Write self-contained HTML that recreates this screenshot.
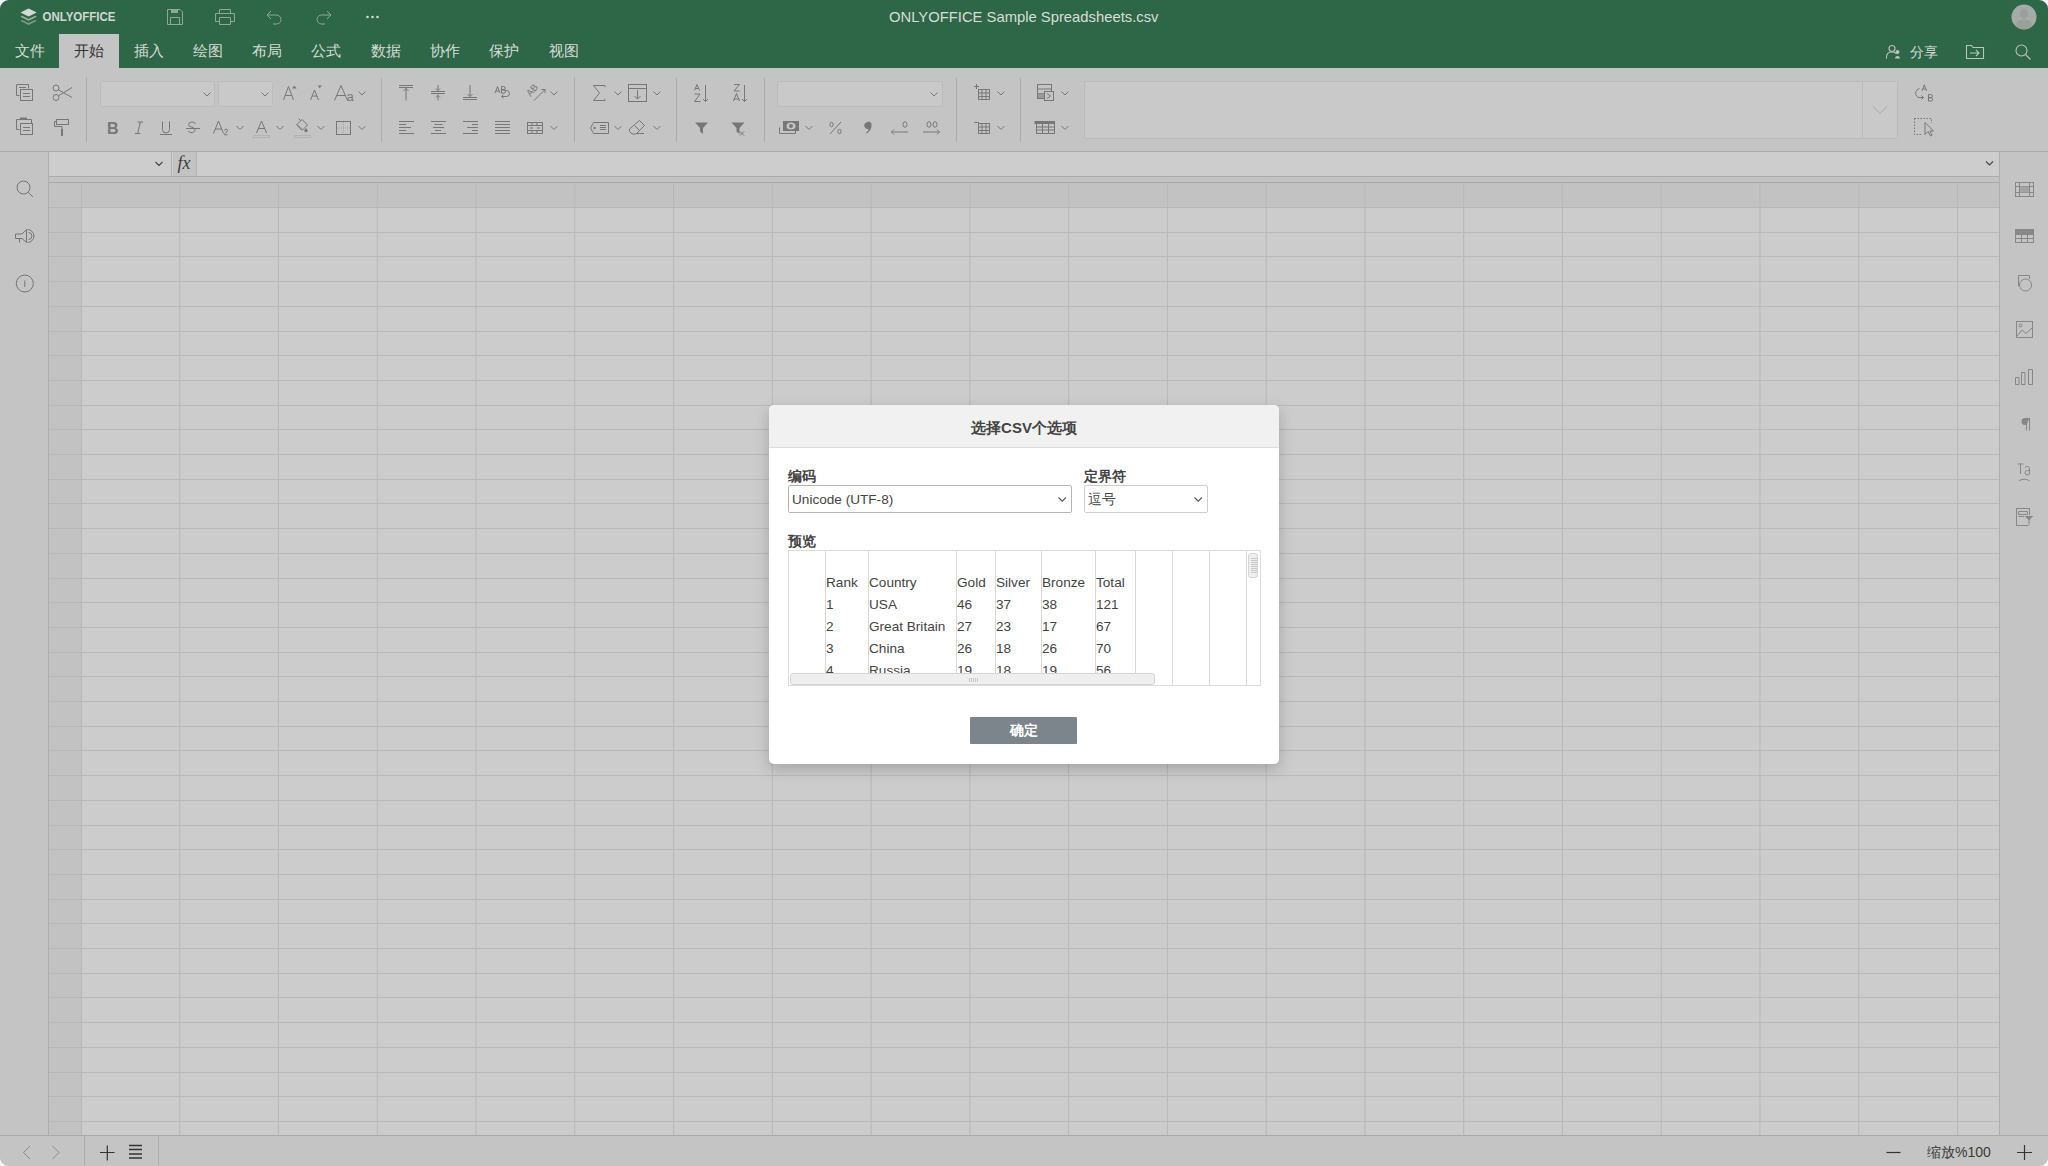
<!DOCTYPE html>
<html><head><meta charset="utf-8">
<style>
*{box-sizing:border-box;margin:0;padding:0}
html,body{width:2048px;height:1166px;overflow:hidden;background:#f4f4f4;font-family:"Liberation Sans",sans-serif}
#win{position:absolute;left:0;top:0;width:2048px;height:1166px;border-radius:9px;overflow:hidden;background:#c4c4c4}
.abs{position:absolute}
#hdr{position:absolute;left:0;top:0;width:2048px;height:68px;background:#2e6747}
.tab{position:absolute;top:34px;height:34px;width:60px;color:#d6dcd8;font-size:15px;line-height:34px;text-align:center}
.tab.act{background:#c4c4c4;color:#333}
#title{position:absolute;left:889px;top:9px;font-size:14.8px;color:#d9ddda;white-space:nowrap}
#tb{position:absolute;left:0;top:68px;width:2048px;height:83px;background:#c4c4c4}
.sep{position:absolute;top:78px;width:1px;height:64px;background:#afafaf}
.combo{position:absolute;height:26px;border:1px solid #bdbdbd;border-radius:2px;background:#c9c9c9}
svg{position:absolute;overflow:visible}
#fbar{position:absolute;left:49px;top:151px;width:1950px;height:26px;background:#cdcdcd;border-top:1px solid #ababab;border-bottom:1px solid #ababab}
#lside{position:absolute;left:0;top:151px;width:49px;height:984px;background:#c4c4c4;border-right:1px solid #aeaeae}
#rside{position:absolute;left:1999px;top:151px;width:49px;height:984px;background:#c4c4c4;border-left:1px solid #aeaeae}
#sheet{position:absolute;left:49px;top:177px;width:1950px;height:958px;background:#cccccc}
#status{position:absolute;left:0;top:1135px;width:2048px;height:31px;background:#c4c4c4;border-top:1px solid #a9a9a9}
#dlg{position:absolute;left:769px;top:405px;width:510px;height:359px;background:#fff;border-radius:5px;box-shadow:0 5px 15px rgba(0,0,0,0.2)}
#dlgh{position:absolute;left:0;top:0;width:510px;height:43px;padding-top:1px;background:#f1f1f1;border-bottom:1px solid #dcdcdc;border-radius:5px 5px 0 0;text-align:center;font-weight:bold;font-size:15px;color:#444;line-height:43px}
.lbl{position:absolute;font-weight:bold;font-size:14px;color:#444}
.sel{position:absolute;height:28px;border:1px solid #cfcfcf;border-radius:2px;background:#fff;font-size:13.6px;color:#444;line-height:26px;padding-left:3px;padding-top:1px}
#prev{position:absolute;left:19px;top:145px;width:473px;height:136px;border:1px solid #dcdcdc;overflow:hidden;background:#fff}
.pl{position:absolute;top:0;width:1px;height:136px;background:#d9d9d9}
.pt{position:absolute;font-size:13.6px;line-height:22px;color:#444;white-space:nowrap}
#hs{position:absolute;left:1px;top:122px;width:365px;height:12px;background:#efefef;border:1px solid #d5d5d5;border-radius:3px}
#vs{position:absolute;left:459px;top:2px;width:10px;height:25px;background:#efefef;border:1px solid #d5d5d5;border-radius:3px}
#btn{position:absolute;left:201px;top:312px;width:107px;height:27px;background:#7d858c;border-radius:1px;color:#fff;font-weight:bold;font-size:14px;text-align:center;line-height:27px}
</style></head><body>
<div id="win">
 <div id="hdr">
  
  <svg style="left:0;top:0" width="460" height="34">
   <g>
    <path d="M28.6 8.6 L36.7 12.6 L28.6 16.6 L20.5 12.6Z" fill="#d6d8d6"/>
    <path d="M22 15.8 L28.6 19 L35.2 15.8 L36.7 16.8 L28.6 20.8 L20.5 16.8Z" fill="#a3b5a9"/>
    <path d="M22 19.9 L28.6 23.1 L35.2 19.9 L36.7 21 L28.6 25 L20.5 21Z" fill="#7d9a87"/>
   </g>
   <text x="42.5" y="21.5" font-family="Liberation Sans" font-weight="bold" font-size="13" fill="#d3d7d4" transform="translate(42.5 0) scale(0.885 1) translate(-42.5 0)">ONLYOFFICE</text>
   <g fill="none" stroke="#8fa898" stroke-width="1">
    <path d="M167.5 9.5H180l2.5 2.5V24.5H167.5Z"/>
    <path d="M170.5 24.5V17.5H179.5V24.5"/>
    <path d="M171 10H178V13H171Z" fill="#8fa898" stroke="none"/>
    <path d="M219.5 13.5V9.5H230.5V13.5"/>
    <path d="M219.5 21.5H215.5V13.5H234.5V21.5H230.5"/>
    <path d="M219.5 17.5H230.5V24.5H219.5Z"/>
    <path d="M271 11l-4 4 4 4"/>
    <path d="M267.5 15H276.5a4.5 4.5 0 0 1 0 9H273"/>
    <path d="M327 11l4 4-4 4"/>
    <path d="M330.5 15H321.5a4.5 4.5 0 0 0 0 9H325"/>
   </g>
   <g fill="#d0d6d2"><circle cx="367.5" cy="17" r="1.3"/><circle cx="372.5" cy="17" r="1.3"/><circle cx="377.5" cy="17" r="1.3"/></g>
  </svg>
  <svg style="left:1860px;top:0" width="188" height="68">
   <circle cx="164" cy="17" r="12.5" fill="#a3aca6"/>
   <path d="M164 8.5a4.2 4.8 0 0 1 0 10a4.2 4.8 0 0 1 0-10Z M155.5 26 C157 20 160 19.5 164 19.5 C168 19.5 171 20 172.5 26 A12.5 12.5 0 0 1 155.5 26Z" fill="#98a29b"/>
   <g fill="none" stroke="#b8c4bc" stroke-width="1.1">
    <circle cx="32" cy="48.5" r="3"/>
    <path d="M26.5 58.5v-2a5 5 0 0 1 5-4.5h1a5 5 0 0 1 4 2"/>
    <path d="M106.5 45.5h5l1.5 2h10.5v11h-17Z"/>
    <path d="M110 53h9 M116 50l3 3-3 3"/>
    <circle cx="161.5" cy="50.5" r="5.5"/>
    <path d="M165.5 54.5l5 5"/>
   </g>
   <circle cx="37.5" cy="52" r="2" fill="#b8c4bc"/>
   <path d="M35 58.5a2.5 2.5 0 0 1 5 0Z" fill="#b8c4bc"/>
   <text x="49.7" y="57" font-family="Liberation Sans" font-size="14" fill="#d8ddd9">分享</text>
  </svg>
  <div id="title">ONLYOFFICE Sample Spreadsheets.csv</div>
  <div class="tab" style="left:0">文件</div>
  <div class="tab act" style="left:59px">开始</div>
  <div class="tab" style="left:119px">插入</div>
  <div class="tab" style="left:178px">绘图</div>
  <div class="tab" style="left:237px">布局</div>
  <div class="tab" style="left:296px">公式</div>
  <div class="tab" style="left:356px">数据</div>
  <div class="tab" style="left:415px">协作</div>
  <div class="tab" style="left:474px">保护</div>
  <div class="tab" style="left:534px">视图</div>
 </div>
 <div id="tb"></div>
<svg style="left:0;top:0" width="2048" height="151">
 <g fill="none" stroke="#aaaaaa" stroke-width="1">
  <path d="M86.5 78V142M381.5 78V142M574.5 78V142M676.5 78V142M764.5 78V142M956.5 78V142M1020.5 78V142"/>
 </g>
 <g fill="#c9c9c9" stroke="#bcbcbc" stroke-width="1">
  <rect x="100.5" y="81.5" width="114" height="25" rx="2"/>
  <rect x="218.5" y="81.5" width="54" height="25" rx="2"/>
  <rect x="777.5" y="81.5" width="165" height="25" rx="2"/>
  <rect x="1084.5" y="81.5" width="813" height="57"/>
  <path d="M1862.5 82V138"/>
 </g>
 <g fill="none" stroke="#777777" stroke-width="1">
  <!-- chevrons -->
  <path d="M203.5 92.5l3.5 3.5 3.5-3.5M261.5 92.5l3.5 3.5 3.5-3.5M930.5 92.5l3.5 3.5 3.5-3.5"/>
  <path d="M358.5 91.5l3.5 3.5 3.5-3.5M550.5 91.5l3.5 3.5 3.5-3.5M614.5 91.5l3.5 3.5 3.5-3.5M653.5 91.5l3.5 3.5 3.5-3.5M997.5 91.5l3.5 3.5 3.5-3.5M1061.5 91.5l3.5 3.5 3.5-3.5"/>
  <path d="M236.5 126l3.5 3.5 3.5-3.5M276.5 126l3.5 3.5 3.5-3.5M317.5 126l3.5 3.5 3.5-3.5M358.5 126l3.5 3.5 3.5-3.5M550.5 126l3.5 3.5 3.5-3.5M614.5 126l3.5 3.5 3.5-3.5M653.5 126l3.5 3.5 3.5-3.5M805.5 126l3.5 3.5 3.5-3.5M997.5 126l3.5 3.5 3.5-3.5M1061.5 126l3.5 3.5 3.5-3.5"/>
  <path d="M1873 106.5l7 7 7-7" stroke="#a8a8a8"/>
  <!-- copy -->
  <path d="M19.5 95.5H16.5V84.5H28.5V88.5"/>
  <rect x="20.5" y="89.5" width="12" height="11"/>
  <path d="M23 93.5h7M23 96.5h7M19 87.5h7"/>
  <!-- scissors -->
  <circle cx="56" cy="88" r="3"/><circle cx="56" cy="97.5" r="3"/>
  <path d="M58.5 89.8L72 97.5M58.5 95.8L72 87.5"/>
  <!-- paste -->
  <path d="M19.5 129.5H16.5V119.5H31.5V123.5"/>
  <rect x="20.5" y="123.5" width="12" height="11"/>
  <path d="M23 127.5h7M23 130.5h7"/>
  <path d="M20 118.5h7" stroke-width="2"/>
  <!-- format painter -->
  <rect x="56.5" y="119.5" width="12" height="5"/>
  <path d="M56.5 121.5H54.5V126.5H62V129"/>
  <path d="M62 129V136" stroke-width="2"/>
  <!-- A^ A_ -->
  <path d="M283.5 100L288.5 86.5L293.5 100M285.3 95.5H291.7"/>
  <path d="M310.5 100L314.5 90L318.5 100M312 96H317"/>
  <!-- Aa -->
  <path d="M334.5 100.5L341 85.5L347.5 100.5M336.8 95.5H345.2"/>
  
  <!-- I U S -->
  <path d="M137.5 122H143M135 133.5H140.5M140.3 122L137.7 133.5"/>
  <path d="M162.5 121.5V129.5a3.5 3.5 0 0 0 7 0V121.5M160 134.5H172"/>
  <path d="M195.5 124a3.5 2.6 0 1 0-3.5 3.2a3.5 2.8 0 1 1-3.8 3.8M186 128.5H200"/>
  <!-- A2 -->
  <path d="M213.5 133.5L218.5 121L223.5 133.5M215.2 129H221.8"/>
  <path d="M224.5 130.5a1.5 1.5 0 0 1 3 .3c0 1-3 2.5-3 4h3"/>
  <!-- A color -->
  <path d="M256.5 133L261.5 121L266.5 133M258.3 128.5H264.7"/>
  <rect x="253.5" y="135.5" width="16" height="2" stroke="#b3b3b3"/>
  <!-- fill bucket -->
  <path d="M297 124.5l5-5 5.5 5.5-5 5-5.5-5.5Z M296.5 124.5L302 130.5"/>
  <path d="M298.5 118.5l2.5 2.5"/>
  <rect x="294.5" y="135.5" width="16" height="2" stroke="#b3b3b3"/>
  <!-- border -->
  <rect x="336.5" y="121.5" width="14" height="13"/>
  <path d="M343.5 122V134M337 128H350" stroke="#a3a3a3" stroke-dasharray="1 1"/>
  <!-- align top/mid/bottom -->
  <path d="M399 85.5H413M399 87.5H413M406 88V100.5M403.5 91l2.5-2.5 2.5 2.5"/>
  <path d="M431 91.5H445M431 93.5H445M438 85V90.5M438 94.5V100.5M436 88.5l2 2 2-2M436 97.5l2-2 2 2"/>
  <path d="M463 97.5H477M463 99.5H477M470 85V96.5M467.5 94l2.5 2.5 2.5-2.5"/>
  <!-- AB wrap -->
  <path d="M495 93L497.5 86.5L500 93M495.8 91H499.2M501.5 86.5V93H504a1.6 1.6 0 0 0 0-3.3H501.5h2.2a1.5 1.5 0 0 0 0-3.2H501.5"/>
  <path d="M503.5 90.5h3a3 3 0 0 1 0 6h-4.5M503.5 94.5l-2 2 2 2"/>
  <!-- AB rotate -->
  <path d="M534 100.5L545 89.5M541.5 89.5h3.5v3.5"/>
  <!-- align left center right justify -->
  <path d="M399 121.5H414M399 124.5H406M399 127.5H411M399 130.5H406M399 133.5H414"/>
  <path d="M431 121.5H446M434.5 124.5H442.5M433 127.5H444M435 130.5H441M431 133.5H446"/>
  <path d="M463 121.5H478M472 124.5H478M467 127.5H478M472 130.5H478M463 133.5H478"/>
  <path d="M495 121.5H510M495 124.5H510M495 127.5H510M495 130.5H510M495 133.5H510"/>
  <!-- merge -->
  <rect x="527.5" y="122.5" width="15" height="11"/>
  <path d="M528 125.5H542M528 130.5H542M532 122.5v3M537 122.5v3M532 130.5v3M537 130.5v3M530 128h3M537 128h3"/>
  <!-- sigma -->
  <path d="M605 87V85.5H593.5L599.5 93L593.5 100.5H605V99"/>
  <!-- fill down -->
  <rect x="628.5" y="84.5" width="18" height="17"/>
  <path d="M629 88.5H646M637.5 90V99M634.5 96l3 3 3-3"/>
  <!-- tag -->
  <path d="M593.5 122.5H608.5V133.5H593.5L590.5 128Z"/>
  <path d="M600 125.5h6M600 127.5h6M600 129.5h6"/>
  <circle cx="594.5" cy="128" r="0.8" fill="#777777"/>
  <!-- eraser -->
  <path d="M639.5 120.5l5 5-8.5 8.5h-4l-2.5-2.5v-2.5Z M634.5 125.5l5 5M636 133.5h8"/>
  <!-- AZ / ZA -->
  <path d="M694.5 90.5L697 84.5L699.5 90.5M695.3 88.5H698.7M694.5 94H700L694.5 101.5H700.5M705.5 85V101.5M703 99l2.5 2.5 2.5-2.5"/>
  <path d="M734 84.5H739.5L734 91H739.5M733.5 101L736.5 93.5L739.5 101M734.3 99H738.7M744.5 85V101.5M742 99l2.5 2.5 2.5-2.5"/>
  <!-- percent -->
  <path d="M830 134L841 122"/><ellipse cx="831.5" cy="124.5" rx="1.6" ry="2.2"/><ellipse cx="839.5" cy="131.5" rx="1.6" ry="2.2"/>
  <!-- dec -->
  <path d="M891.5 132H908M894 129.5l-2.5 2.5 2.5 2.5"/><ellipse cx="905" cy="124.5" rx="2" ry="2.8"/>
  <path d="M923 132H939.5M937 129.5l2.5 2.5-2.5 2.5"/><ellipse cx="929" cy="124.5" rx="2" ry="2.8"/><ellipse cx="935" cy="124.5" rx="2" ry="2.8"/>
  <!-- money -->
  <path d="M779.5 127.5V133.5H795.5V131"/>
  <!-- insert/delete cells -->
  <path d="M974 86.5h5M976.5 84v5M974 122.5h5"/>
  <rect x="978.5" y="89.5" width="11" height="10"/><path d="M982 90v9M986 90v9M979 93h10M979 96.5h10"/>
  <rect x="978.5" y="123.5" width="11" height="10"/><path d="M982 124v9M986 124v9M979 127h10M979 130.5h10"/>
  <!-- cond format -->
  <rect x="1037.5" y="84.5" width="14" height="14"/><path d="M1038 89h13M1038 93.5h13"/>
  <rect x="1044.5" y="91.5" width="9" height="9" fill="#c4c4c4"/><path d="M1047 93.5l3.5 2.5-3.5 2.5"/>
  <!-- table -->
  <rect x="1036.5" y="121.5" width="18" height="12"/><path d="M1037 127h17M1037 130h17M1042.5 124v10M1048.5 124v10"/>
  <!-- replace -->
  <path d="M1919.5 88.5C1915 89.5 1914 96.5 1919 97.5H1923.5M1921.5 95.5l2 2-2 2"/>
  <path d="M1922 91L1924.3 84.8L1926.6 91M1922.8 89H1925.8"/>
  <path d="M1928.5 94.5V101H1931a1.6 1.6 0 0 0 0-3.3H1928.5h2.2a1.5 1.5 0 0 0 0-3.2H1928.5"/>
  <!-- select -->
  <path d="M1914.5 118.5H1931.5V123M1914.5 118.5V134.5H1921" stroke-dasharray="1.5 1.5"/>
  <path d="M1925 122.5V134.5L1928 131.5L1930.5 136L1932 135.2L1929.8 131H1933.5Z"/>
 </g>
 <g fill="#777777">
  <path d="M292 88.5L294.3 85.5L296.6 88.5Z"/>
  <path d="M317.5 85.5h4.4l-2.2 2.8Z"/>
  <text x="107" y="134" font-family="Liberation Sans" font-weight="bold" font-size="16">B</text>
  <text x="346.8" y="100.5" font-family="Liberation Sans" font-size="12.5">a</text>
  <text x="0" y="0" font-family="Liberation Sans" font-size="9.5" transform="translate(530.5 97) rotate(-50)">AB</text>
  <rect x="1034.5" y="121" width="20" height="3"/>
  <path d="M695 122.5h13l-5 5.5v6l-3-2.5v-3.5Z"/>
  <path d="M731.5 122.5h13l-5 5.5v6l-3-2.5v-3.5Z"/>
  <rect x="783" y="121" width="16" height="10"/>
  <path d="M740 131.5l4 4M744 131.5l-4 4" stroke="#777777" fill="none"/>
  <path d="M866.5 122.5a3 3 0 0 1 5 3c0 4-3 7-5 8l-.5-.8c1.5-1 2.5-2.5 2.5-4a2.8 2.8 0 0 1-2-6.2Z"/>
  <rect x="1038" y="93.5" width="6" height="4.5" fill="#9a9a9a"/>
  <path d="M302 130l1.8 2.5a1.8 1.8 0 1 1-3.6 0Z" transform="translate(4 -2)"/>
 </g>
 <g fill="#c4c4c4"><ellipse cx="791" cy="126" rx="4.5" ry="3.5"/></g>
 <g fill="#777777"><circle cx="791" cy="126" r="2"/></g>
</svg>

 <div id="lside"></div>
 <div id="rside"></div>
 <div id="fbar"></div>
 <div id="sheet"></div>
 <div id="status"></div>
 <div style="position:absolute;left:0;top:151px;width:2048px;height:1px;background:#a9a9a9"></div>
 <div id="fname" style="position:absolute;left:49px;top:152px;width:123px;height:24px;background:#cdcdcd;border-right:1px solid #b3b3b3"></div>
 <div style="position:absolute;left:173px;top:152px;width:24px;height:24px;background:#c3c3c3;border-right:1px solid #b3b3b3"></div>
 <div style="position:absolute;left:49px;top:177px;width:1950px;height:6px;background:#c3c3c3;border-bottom:1px solid #a9a9a9"></div>
 <div style="position:absolute;left:49px;top:183px;width:1950px;height:24px;background:#c2c2c2"></div>
 <div style="position:absolute;left:49px;top:183px;width:32px;height:952px;background:#c2c2c2"></div>
 <svg class="abs" style="left:0;top:0" width="2048" height="1166"><path d="M49 207.5H1999M49 232.5H1999M49 256.5H1999M49 281.5H1999M49 306.5H1999M49 331.5H1999M49 355.5H1999M49 380.5H1999M49 405.5H1999M49 429.5H1999M49 454.5H1999M49 479.5H1999M49 503.5H1999M49 528.5H1999M49 553.5H1999M49 578.5H1999M49 602.5H1999M49 627.5H1999M49 652.5H1999M49 676.5H1999M49 701.5H1999M49 726.5H1999M49 750.5H1999M49 775.5H1999M49 800.5H1999M49 825.5H1999M49 849.5H1999M49 874.5H1999M49 899.5H1999M49 923.5H1999M49 948.5H1999M49 973.5H1999M49 997.5H1999M49 1022.5H1999M49 1047.5H1999M49 1072.5H1999M49 1096.5H1999M49 1121.5H1999M81.50 183V1135M179.76 183V1135M278.53 183V1135M377.29 183V1135M476.05 183V1135M574.82 183V1135M673.58 183V1135M772.34 183V1135M871.10 183V1135M969.87 183V1135M1068.63 183V1135M1167.39 183V1135M1266.16 183V1135M1364.92 183V1135M1463.68 183V1135M1562.45 183V1135M1661.21 183V1135M1759.97 183V1135M1858.73 183V1135M1957.50 183V1135" stroke="#b8b8b8" stroke-width="1" fill="none"/></svg>
 <svg style="left:0;top:140px" width="2048" height="50">
  <g fill="none" stroke="#454545" stroke-width="1.1"><path d="M155.5 162l3.5 3.5 3.5-3.5M1986 161.5l3.5 3.5 3.5-3.5" transform="translate(0 -140)"/></g>
  <text x="177.5" y="28.5" font-family="Liberation Serif" font-style="italic" font-size="18" fill="#3c3c3c">fx</text>
 </svg>
 <svg style="left:0;top:170px" width="50" height="130">
  <g fill="none" stroke="#747474" stroke-width="1" transform="translate(0 -170)">
   <circle cx="23.5" cy="187.5" r="6.5"/><path d="M28.3 192.3l4.5 4.7"/>
   <path d="M15.5 234H22L26.5 229.5V242.5L22 238.5H15.5Z M19.5 238.5V242.5"/>
   <path d="M27.5 229.5A6.5 6.5 0 0 1 27.5 242.5M28.5 232.5A3.5 3.5 0 0 1 28.5 239.5"/>
   <circle cx="24.8" cy="283.5" r="8.5"/><path d="M24.8 280.5v6.5"/>
  </g>
 </svg>
 <svg style="left:1999px;top:170px" width="49" height="370">
  <g fill="none" stroke="#878787" stroke-width="1" transform="translate(-1999 -170)">
   <rect x="2015.5" y="182.5" width="18" height="14"/><path d="M2019.5 183v13M2029.5 183v13M2016 186.5h17M2016 192.5h17"/>
   <rect x="2015.5" y="229.5" width="18" height="13"/><path d="M2016 234.5h17M2016 238.5h17M2021.5 233v9M2027.5 233v9"/>
   <path d="M2018.5 286V275.5H2029.5V279"/><circle cx="2025.5" cy="285" r="6"/>
   <rect x="2016.5" y="321.5" width="16" height="16"/><path d="M2017 336l5-6 4 3.5 6.5-6"/><circle cx="2020.5" cy="325.5" r="1.5"/>
   <path d="M2015.5 377.5h3.5v7h-3.5Z M2021.5 372.5h3.5v12h-3.5Z M2028.5 369.5h4v15h-4Z"/>
   <path d="M2026.5 418v12.5M2029.5 418v12.5"/>
   <path d="M2017.5 464h6M2020.5 464v10M2025 467.5a2.5 2.5 0 0 1 4.5 1.5v5M2029.5 470.5c-3 0-4.5.5-4.5 2a1.8 1.8 0 0 0 4.5 .5M2019 481a6 3.5 0 0 1 10.5 0"/>
   <rect x="2016.5" y="508.5" width="13" height="17"/><path d="M2018.5 511.5h9v3h-9Z M2018.5 516.5h9"/>
  </g>
  <g fill="#878787" transform="translate(-1999 -170)">
   <path d="M2029.5 418h-4.5a3.5 3.5 0 0 0 0 7h1.5Z"/>
   <rect x="2015" y="182" width="0" height="0"/>
   <path d="M2024 515.5h10l-4 4.5v6l-2-1.5v-4.5Z" stroke="#c4c4c4" stroke-width="1"/>
   <rect x="2016" y="230" width="18" height="4"/>
   <rect x="2020" y="186.5" width="9" height="6" fill="#a3a3a3"/>
  </g>
 </svg>
 <svg style="left:0;top:1136px" width="2048" height="30">
  <g fill="none" stroke="#8a8a8a" stroke-width="1" transform="translate(0 -1136)">
   <path d="M30 1146l-6.5 6.5 6.5 6.5M52.5 1146l6.5 6.5-6.5 6.5"/>
   <path d="M84.5 1136V1166M158.5 1136V1166" stroke="#adadad"/>
  </g>
  <g fill="none" stroke="#333" stroke-width="1.2" transform="translate(0 -1136)">
   <path d="M100 1152.5h14.5M107.3 1145.5v15"/>
   <path d="M129 1145.5h13M129 1149.5h13M129 1154h13M129 1158h13" stroke-width="1.3"/>
   <path d="M1886.5 1152.5h14"/>
   <path d="M2017 1152.5h15M2024.5 1145v15"/>
  </g>
  <text x="1927" y="21" font-family="Liberation Sans" font-size="14" fill="#3a3a3a">缩放%100</text>
 </svg>

</div>
<div id="dlg">
 <div id="dlgh">选择CSV个选项</div>
 <div class="lbl" style="left:19px;top:63px">编码</div>
 <div class="lbl" style="left:315px;top:63px">定界符</div>
 <div class="sel" style="left:19px;top:80px;width:284px;border-color:#b5b5b5">Unicode (UTF-8)<svg style="left:269px;top:11px" width="9" height="6"><path d="M.5 .5l3.7 3.7 3.7-3.7" fill="none" stroke="#555" stroke-width="1.1"/></svg></div>
 <div class="sel" style="left:315px;top:80px;width:124px">逗号<svg style="left:109px;top:11px" width="9" height="6"><path d="M.5 .5l3.7 3.7 3.7-3.7" fill="none" stroke="#555" stroke-width="1.1"/></svg></div>
 <div class="lbl" style="left:19px;top:128px">预览</div>
 <div id="prev"><div class="pl" style="left:36px"></div><div class="pl" style="left:79px"></div><div class="pl" style="left:167px"></div><div class="pl" style="left:206px"></div><div class="pl" style="left:252px"></div><div class="pl" style="left:306px"></div><div class="pl" style="left:346px"></div><div class="pl" style="left:383px"></div><div class="pl" style="left:420px"></div><div class="pl" style="left:457px"></div><div class="pt" style="left:37px;top:21px">Rank</div><div class="pt" style="left:80px;top:21px">Country</div><div class="pt" style="left:168px;top:21px">Gold</div><div class="pt" style="left:207px;top:21px">Silver</div><div class="pt" style="left:253px;top:21px">Bronze</div><div class="pt" style="left:307px;top:21px">Total</div><div class="pt" style="left:37px;top:43px">1</div><div class="pt" style="left:80px;top:43px">USA</div><div class="pt" style="left:168px;top:43px">46</div><div class="pt" style="left:207px;top:43px">37</div><div class="pt" style="left:253px;top:43px">38</div><div class="pt" style="left:307px;top:43px">121</div><div class="pt" style="left:37px;top:65px">2</div><div class="pt" style="left:80px;top:65px">Great Britain</div><div class="pt" style="left:168px;top:65px">27</div><div class="pt" style="left:207px;top:65px">23</div><div class="pt" style="left:253px;top:65px">17</div><div class="pt" style="left:307px;top:65px">67</div><div class="pt" style="left:37px;top:87px">3</div><div class="pt" style="left:80px;top:87px">China</div><div class="pt" style="left:168px;top:87px">26</div><div class="pt" style="left:207px;top:87px">18</div><div class="pt" style="left:253px;top:87px">26</div><div class="pt" style="left:307px;top:87px">70</div><div class="pt" style="left:37px;top:109px">4</div><div class="pt" style="left:80px;top:109px">Russia</div><div class="pt" style="left:168px;top:109px">19</div><div class="pt" style="left:207px;top:109px">18</div><div class="pt" style="left:253px;top:109px">19</div><div class="pt" style="left:307px;top:109px">56</div><div id="hs"><svg style="left:178px;top:4px" width="10" height="4"><path d="M0.5 0V4M2.5 0V4M4.5 0V4M6.5 0V4M8.5 0V4" stroke="#c8c8c8" stroke-width="1"/></svg></div><div id="vs"><svg style="left:2px;top:4px" width="6" height="16"><path d="M0 .5H6M0 2.5H6M0 4.5H6M0 6.5H6M0 8.5H6M0 10.5H6M0 12.5H6M0 14.5H6" stroke="#c8c8c8" stroke-width="1"/></svg></div></div>
 <div id="btn">确定</div>
</div>
</body></html>
